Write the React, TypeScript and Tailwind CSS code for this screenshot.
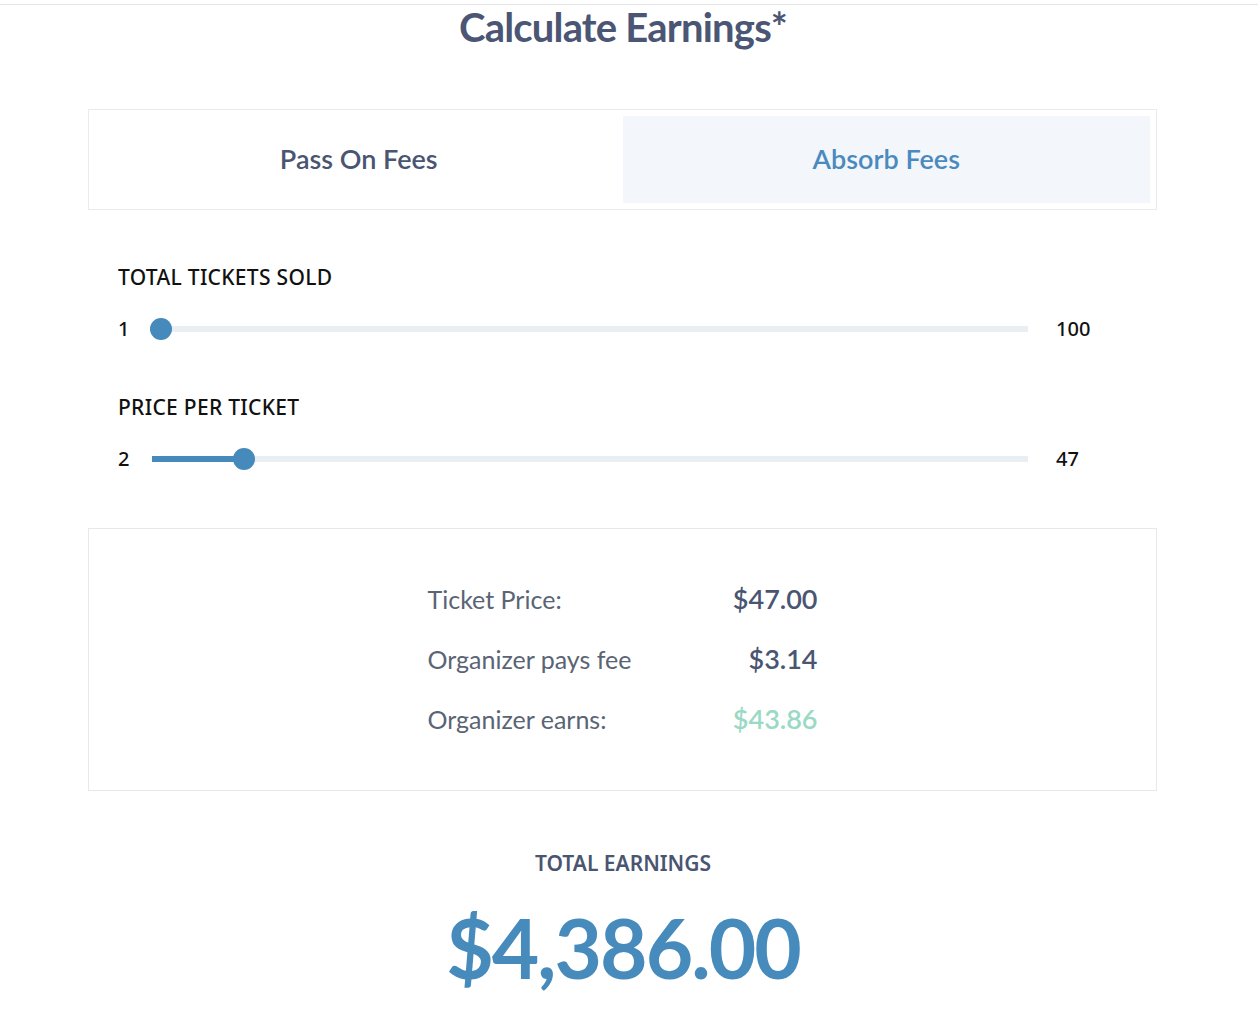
import React, { useState } from 'react';

function Slider({ label, min, max, value, fill }: { label: string; min: string; max: string; value: number; fill: boolean }) {
  // value is percentage of the track
  return (
    <div className="px-[30px]">
      <div className="text-[21px] leading-[30px] text-[#111] font-['Noto_Sans',sans-serif] font-medium tracking-[0.3px]">{label}</div>
      <div className="mt-[24px] flex items-center h-[26px]">
        <div className="w-[34px] text-[20px] font-['Noto_Sans',sans-serif] font-medium text-[#111]">{min}</div>
        <div className="relative w-[876px] h-[6px] bg-[#e9eef3]">
          {fill && <div className="absolute left-0 top-0 h-[6px] bg-[#4689bb]" style={{ width: `${value}%` }} />}
          <div
            className="absolute top-1/2 w-[22px] h-[22px] -translate-y-1/2 -translate-x-1/2 rounded-full bg-[#4689bb]"
            style={{ left: fill ? `${value}%` : '9px' }}
          />
        </div>
        <div className="ml-[28px] text-[20px] font-['Noto_Sans',sans-serif] font-medium text-[#111]">{max}</div>
      </div>
    </div>
  );
}

export default function App() {
  const [tab, setTab] = useState<'pass' | 'absorb'>('absorb');

  return (
    <div className="min-h-screen bg-white font-['Lato',sans-serif] border-t border-[#e3e5e8] mt-[4px]">
      <h1 className="text-center text-[40px] leading-[46px] font-bold text-[#4b5675] tracking-[-0.8px] -mt-[1px] pr-[12px]">
        Calculate Earnings*
      </h1>

      <div className="ml-[88px] w-[1069px] mt-[59px] border border-[#e8ecef] p-[6px] flex">
        <button
          onClick={() => setTab('pass')}
          className={`flex-1 h-[87px] text-[27px] font-semibold ${tab === 'pass' ? 'bg-[#f3f6fb] text-[#4a8abf]' : 'text-[#4a5572]'}`}
        >
          Pass On Fees
        </button>
        <button
          onClick={() => setTab('absorb')}
          className={`flex-1 h-[87px] text-[27px] font-semibold ${tab === 'absorb' ? 'bg-[#f3f6fb] text-[#4a8abf]' : 'text-[#4a5572]'}`}
        >
          Absorb Fees
        </button>
      </div>

      <div className="ml-[88px] w-[1069px] mt-[52px] flex flex-col gap-[50px]">
        <Slider label="TOTAL TICKETS SOLD" min="1" max="100" value={1} fill={false} />
        <Slider label="PRICE PER TICKET" min="2" max="47" value={10.5} fill={true} />
      </div>

      <div className="ml-[88px] w-[1069px] mt-[56px] h-[263px] border border-[#e5e8ec] flex flex-col justify-center items-center">
        <div className="w-[390px] flex flex-col gap-[28px]">
          <div className="flex justify-between items-center h-[32px]">
            <span className="text-[25px] text-[#5a6474]">Ticket Price:</span>
            <span className="text-[27px] font-semibold text-[#4a5572]">$47.00</span>
          </div>
          <div className="flex justify-between items-center h-[32px]">
            <span className="text-[25px] text-[#5a6474]">Organizer pays fee</span>
            <span className="text-[27px] font-semibold text-[#4a5572]">$3.14</span>
          </div>
          <div className="flex justify-between items-center h-[32px]">
            <span className="text-[25px] text-[#5a6474]">Organizer earns:</span>
            <span className="text-[27px] font-semibold text-[#9ad9c4]">$43.86</span>
          </div>
        </div>
      </div>

      <div className="mt-[58px] flex flex-col items-center pr-[12px]">
        <div className="text-[21px] leading-[28px] font-semibold text-[#4a5572] font-['Noto_Sans',sans-serif]">TOTAL EARNINGS</div>
        <div className="mt-[25px] text-[82px] leading-[90px] font-bold text-[#478bbd] tracking-[-2px]">$4,386.00</div>
      </div>
    </div>
  );
}
